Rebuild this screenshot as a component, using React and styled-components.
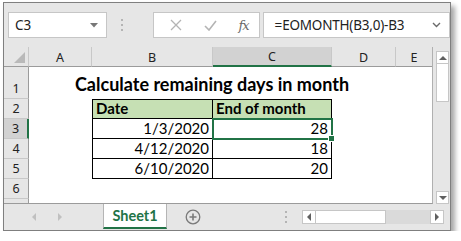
import React from "react";
import styled, { createGlobalStyle, css } from "styled-components";

const GlobalStyle = createGlobalStyle`
  html, body {
    margin: 0;
    padding: 0;
    background: #ffffff;
  }
  body {
    font-family: "Noto Sans", "Liberation Sans", sans-serif;
  }
`;

const GREEN = "#217346";
const HEAD_BG = "#e6e6e6";
const HEAD_SEL = "#d2d2d2";

const Page = styled.div`
  padding: 2px 0 0 3px;
`;

const Window = styled.div`
  width: 448px;
  height: 229px;
  box-sizing: border-box;
  border: 1px solid #7f7f7f;
  box-shadow: 4px 4px 5px rgba(0, 0, 0, 0.35);
  background: ${HEAD_BG};
  display: flex;
  flex-direction: column;
  overflow: hidden;
`;

/* ---------- formula bar ---------- */

const FormulaBar = styled.div`
  height: 44px;
  display: flex;
  align-items: flex-start;
  padding: 9px 0 0 4px;
  box-sizing: border-box;
`;

const Field = styled.div`
  height: 26px;
  box-sizing: border-box;
  background: #ffffff;
  border: 1px solid #c6c6c6;
  display: flex;
  align-items: center;
  font-family: "Noto Sans", sans-serif;
  font-size: 13.5px;
  color: #222;
`;

const NameBox = styled(Field)`
  width: 103px;
  padding: 0 8px 0 6px;
  justify-content: space-between;
`;

const Buttons = styled(Field)`
  width: 110px;
  margin-left: 30px;
  padding: 0 10px 0 16px;
  justify-content: space-between;
`;

const Formula = styled(Field)`
  width: 195px;
  margin-left: 3px;
  padding: 0 8px 0 11px;
  justify-content: space-between;
  letter-spacing: -0.2px;
`;

const Grip = styled.div`
  width: 2px;
  margin: 7px 0 0 14px;
  display: flex;
  flex-direction: column;
  gap: 3px;
  span {
    width: 2px;
    height: 2px;
    background: #b4b4b4;
  }
`;

const Fx = styled.span`
  font-family: "DejaVu Serif", serif;
  font-style: italic;
  font-size: 13px;
  color: #6a6a6a;
  letter-spacing: -1px;
`;

/* ---------- sheet ---------- */

const Main = styled.div`
  height: 157px;
  display: flex;
`;

const Sheet = styled.div`
  flex: 1;
  display: grid;
  grid-template-columns: 25px 63px 121px 119px 64px 37px;
  grid-template-rows: 20px 32px 20px 20px 20px 20px 20px 5px;
  background: #ffffff;
  overflow: hidden;
  border-right: 1px solid #b0b0b0;
  border-bottom: 1px solid #9b9b9b;
`;

const Corner = styled.div`
  background: ${HEAD_BG};
  border-right: 1px solid #c8c8c8;
  border-bottom: 1px solid #9b9b9b;
  display: flex;
  align-items: flex-end;
  justify-content: flex-end;
  padding: 0 3px 3px 0;
  &::after {
    content: "";
    width: 0;
    height: 0;
    border-left: 11px solid transparent;
    border-bottom: 11px solid #b9b9b9;
  }
`;

const ColHead = styled.div`
  background: ${(p) => (p.$sel ? HEAD_SEL : HEAD_BG)};
  border-right: 1px solid #c8c8c8;
  border-bottom: ${(p) => (p.$sel ? `2px solid ${GREEN}` : "1px solid #9b9b9b")};
  display: flex;
  align-items: center;
  justify-content: center;
  font-family: "Noto Sans", sans-serif;
  font-size: 12.5px;
  color: #222;
  padding-top: 1px;
`;

const RowHead = styled.div`
  background: ${(p) => (p.$sel ? HEAD_SEL : HEAD_BG)};
  border-bottom: 1px solid #c8c8c8;
  border-right: ${(p) => (p.$sel ? `2px solid ${GREEN}` : "1px solid #9b9b9b")};
  display: flex;
  align-items: flex-end;
  justify-content: center;
  padding-bottom: 1px;
  overflow: hidden;
  font-family: "Noto Sans", sans-serif;
  font-size: 12.5px;
  color: #222;
`;

const Cell = styled.div`
  box-sizing: border-box;
  display: flex;
  align-items: flex-end;
  justify-content: ${(p) => (p.$right ? "flex-end" : "flex-start")};
  padding: 0 3px 1px 3px;
  font-family: Lato, "Liberation Sans", sans-serif;
  font-size: 15px;
  color: #000;
  white-space: nowrap;
  background: ${(p) => (p.$head ? "#c6e0b4" : "transparent")};
  font-weight: ${(p) => (p.$head ? 700 : 400)};
  ${(p) =>
    p.$table &&
    css`
      border-right: 1px solid #000;
      border-bottom: 1px solid #000;
    `}
  ${(p) => p.$first && css`border-left: 1px solid #000;`}
  ${(p) => p.$head && css`border-top: 1px solid #000;`}
  ${(p) =>
    p.$active &&
    css`
      position: relative;
      outline: 2px solid ${GREEN};
      outline-offset: -1px;
      z-index: 1;
      &::after {
        content: "";
        position: absolute;
        right: -4px;
        bottom: -4px;
        width: 5px;
        height: 5px;
        background: ${GREEN};
        border: 1px solid #fff;
      }
    `}
`;

const Title = styled.div`
  grid-column: 3 / span 2;
  position: relative;
  z-index: 1;
  display: flex;
  align-items: flex-end;
  justify-content: center;
  padding-bottom: 4px;
  font-family: Lato, "Liberation Sans", sans-serif;
  font-weight: 700;
  font-size: 18px;
  white-space: nowrap;
  color: #000;
`;

/* ---------- scrollbars ---------- */

const VScroll = styled.div`
  width: 17px;
  display: flex;
  flex-direction: column;
  padding: 4px 0 0 3px;
  box-sizing: border-box;
`;

const ScrollBtn = styled.div`
  width: 13px;
  height: 13px;
  box-sizing: border-box;
  background: #fff;
  border: 1px solid #c6c6c6;
  display: flex;
  align-items: center;
  justify-content: center;
  &::after {
    content: "";
    border: 4px solid transparent;
    ${(p) => p.$dir === "up" && css`border-bottom-color: #606060; margin-top: -4px;`}
    ${(p) => p.$dir === "down" && css`border-top-color: #606060; margin-bottom: -4px;`}
    ${(p) => p.$dir === "left" && css`border-right-color: #606060; margin-left: -4px;`}
    ${(p) => p.$dir === "right" && css`border-left-color: #606060; margin-right: -4px;`}
  }
`;

const VThumb = styled.div`
  width: 13px;
  height: 38px;
  box-sizing: border-box;
  background: #fff;
  border: 1px solid #c6c6c6;
  border-top: none;
`;

const VTrack = styled.div`
  flex: 1;
`;

/* ---------- tab bar ---------- */

const TabBar = styled.div`
  height: 26px;
  display: flex;
  align-items: stretch;
`;

const Nav = styled.div`
  width: 99px;
  display: flex;
  align-items: center;
  gap: 22px;
  padding-left: 28px;
  box-sizing: border-box;
`;

const Arrow = styled.span`
  width: 0;
  height: 0;
  border: 4px solid transparent;
  ${(p) =>
    p.$dir === "left"
      ? css`border-right-color: #c0c0c0; border-left-width: 0;`
      : css`border-left-color: #c0c0c0; border-right-width: 0;`}
`;

const Tab = styled.div`
  width: 64px;
  box-sizing: border-box;
  margin-bottom: 1px;
  background: #fff;
  border-left: 1px solid #b5b5b5;
  border-right: 1px solid #b5b5b5;
  border-bottom: 2px solid ${GREEN};
  display: flex;
  align-items: center;
  justify-content: center;
  font-family: Lato, "Liberation Sans", sans-serif;
  font-weight: 700;
  font-size: 14.5px;
  color: ${GREEN};
`;

const AddSheet = styled.div`
  width: 52px;
  display: flex;
  align-items: center;
  justify-content: center;
  padding-bottom: 1px;
`;

const HScroll = styled.div`
  flex: 1;
  display: flex;
  align-items: center;
  padding: 0 0 1px 0;
`;

const HGrip = styled.div`
  width: 2px;
  margin: 0 15px 0 66px;
  display: flex;
  flex-direction: column;
  gap: 3px;
  span {
    width: 2px;
    height: 2px;
    background: #b4b4b4;
  }
`;

const HBar = styled.div`
  width: 142px;
  height: 14px;
  display: flex;
  background: #dadada;
`;

const HThumb = styled.div`
  width: 70px;
  box-sizing: border-box;
  background: #fff;
  border: 1px solid #c6c6c6;
  border-left: none;
`;

const HBtn = styled(ScrollBtn)`
  height: 14px;
  width: 14px;
`;

const Spacer = styled.div`
  flex: 1;
`;

const X = () => (
  <svg width="12" height="12" viewBox="0 0 12 12">
    <path d="M1 1 L11 11 M11 1 L1 11" stroke="#b4b4b4" strokeWidth="1.3" fill="none" />
  </svg>
);

const Check = () => (
  <svg width="13" height="11" viewBox="0 0 13 11">
    <path d="M1 6 L5 10 L12 1" stroke="#b4b4b4" strokeWidth="1.6" fill="none" />
  </svg>
);

const Caret = ({ chevron }) =>
  chevron ? (
    <svg width="9" height="6" viewBox="0 0 9 6">
      <path d="M1 1 L4.5 4.5 L8 1" stroke="#6a6a6a" strokeWidth="1.4" fill="none" />
    </svg>
  ) : (
    <svg width="8" height="5" viewBox="0 0 8 5">
      <path d="M0 0 H8 L4 4.5 Z" fill="#777" />
    </svg>
  );

const Plus = () => (
  <svg width="16" height="16" viewBox="0 0 16 16">
    <circle cx="8" cy="8" r="6.8" stroke="#7a7a7a" strokeWidth="1.3" fill="none" />
    <path d="M8 4.5 V11.5 M4.5 8 H11.5" stroke="#7a7a7a" strokeWidth="1.6" />
  </svg>
);

const columns = ["A", "B", "C", "D", "E"];

const rows = [
  { n: 1 },
  { n: 2, b: "Date", c: "End of month", head: true },
  { n: 3, b: "1/3/2020", c: "28", active: true },
  { n: 4, b: "4/12/2020", c: "18" },
  { n: 5, b: "6/10/2020", c: "20" },
  { n: 6 },
  { n: 7 },
];

export default function App() {
  return (
    <>
      <GlobalStyle />
      <Page>
        <Window>
          <FormulaBar>
            <NameBox>
              <span>C3</span>
              <Caret />
            </NameBox>
            <Grip>
              <span />
              <span />
              <span />
            </Grip>
            <Buttons>
              <X />
              <Check />
              <Fx>fx</Fx>
            </Buttons>
            <Formula>
              <span>=EOMONTH(B3,0)-B3</span>
              <Caret chevron />
            </Formula>
          </FormulaBar>

          <Main>
            <Sheet>
              <Corner />
              {columns.map((c) => (
                <ColHead key={c} $sel={c === "C"}>
                  {c}
                </ColHead>
              ))}
              {rows.map((r) => (
                <React.Fragment key={r.n}>
                  <RowHead $sel={r.active}>{r.n < 7 ? r.n : ""}</RowHead>
                  <Cell />
                  {r.n === 1 ? (
                    <Title>Calculate remaining days in month</Title>
                  ) : r.b ? (
                    <>
                      <Cell $table $first $head={r.head} $right={!r.head}>
                        {r.b}
                      </Cell>
                      <Cell $table $head={r.head} $right={!r.head} $active={r.active}>
                        {r.c}
                      </Cell>
                    </>
                  ) : (
                    <>
                      <Cell />
                      <Cell />
                    </>
                  )}
                  <Cell />
                  <Cell />
                </React.Fragment>
              ))}
            </Sheet>
            <VScroll>
              <ScrollBtn $dir="up" />
              <VThumb />
              <VTrack />
              <ScrollBtn $dir="down" />
            </VScroll>
          </Main>

          <TabBar>
            <Nav>
              <Arrow $dir="left" />
              <Arrow $dir="right" />
            </Nav>
            <Tab>Sheet1</Tab>
            <AddSheet>
              <Plus />
            </AddSheet>
            <HScroll>
              <HGrip>
                <span />
                <span />
                <span />
              </HGrip>
              <HBar>
                <HBtn $dir="left" />
                <HThumb />
                <Spacer />
                <HBtn $dir="right" />
              </HBar>
            </HScroll>
          </TabBar>
        </Window>
      </Page>
    </>
  );
}
